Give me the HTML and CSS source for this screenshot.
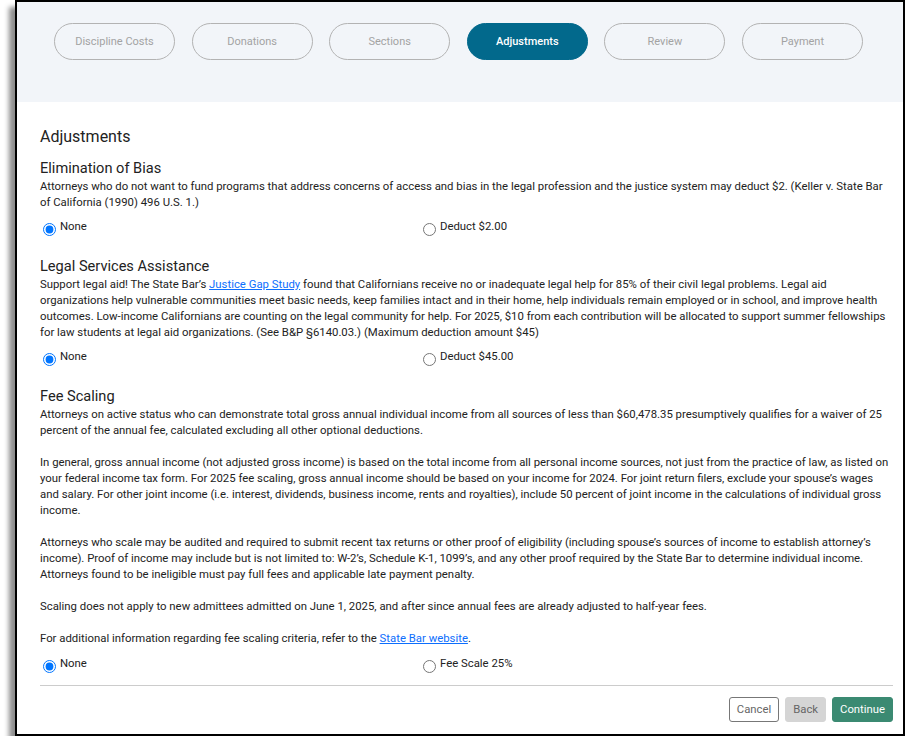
FILE: index.html
```html
<!DOCTYPE html>
<html lang="en">
<head>
    <meta charset="UTF-8">
    <meta name="viewport" content="width=device-width, initial-scale=1.0">
    <title>Adjustments</title>
    <link rel="stylesheet" href="styles.css">
</head>
<body>
    <div class="window">
        <div class="steps">
            <div class="step">Discipline Costs</div>
            <div class="step">Donations</div>
            <div class="step">Sections</div>
            <div class="step active">Adjustments</div>
            <div class="step">Review</div>
            <div class="step">Payment</div>
        </div>

        <div class="content">
            <h2>Adjustments</h2>

            <div class="section first">
                <h3>Elimination of Bias</h3>
                <p>Attorneys who do not want to fund programs that address concerns of access and bias in the legal profession and the justice system may deduct $2. (Keller v. State Bar of California (1990) 496 U.S. 1.)</p>
                <div class="options">
                    <label class="option"><input type="radio" name="bias" checked><span>None</span></label>
                    <label class="option"><input type="radio" name="bias"><span>Deduct $2.00</span></label>
                </div>
            </div>

            <div class="section">
                <h3>Legal Services Assistance</h3>
                <p>Support legal aid! The State Bar’s <a href="#">Justice Gap Study</a> found that Californians receive no or inadequate legal help for 85% of their civil legal problems. Legal aid organizations help vulnerable communities meet basic needs, keep families intact and in their home, help individuals remain employed or in school, and improve health outcomes. Low-income Californians are counting on the legal community for help. For 2025, $10 from each contribution will be allocated to support summer fellowships for law students at legal aid organizations. (See B&amp;P §6140.03.) (Maximum deduction amount $45)</p>
                <div class="options">
                    <label class="option"><input type="radio" name="legal" checked><span>None</span></label>
                    <label class="option"><input type="radio" name="legal"><span>Deduct $45.00</span></label>
                </div>
            </div>

            <div class="section">
                <h3>Fee Scaling</h3>
                <p>Attorneys on active status who can demonstrate total gross annual individual income from all sources of less than $60,478.35 presumptively qualifies for a waiver of 25 percent of the annual fee, calculated excluding all other optional deductions.</p>
                <p>In general, gross annual income (not adjusted gross income) is based on the total income from all personal income sources, not just from the practice of law, as listed on your federal income tax form. For 2025 fee scaling, gross annual income should be based on your income for 2024. For joint return filers, exclude your spouse’s wages and salary. For other joint income (i.e. interest, dividends, business income, rents and royalties), include 50 percent of joint income in the calculations of individual gross income.</p>
                <p>Attorneys who scale may be audited and required to submit recent tax returns or other proof of eligibility (including spouse’s sources of income to establish attorney’s income). Proof of income may include but is not limited to: W-2’s, Schedule K-1, 1099’s, and any other proof required by the State Bar to determine individual income. Attorneys found to be ineligible must pay full fees and applicable late payment penalty.</p>
                <p>Scaling does not apply to new admittees admitted on June 1, 2025, and after since annual fees are already adjusted to half-year fees.</p>
                <p>For additional information regarding fee scaling criteria, refer to the <a href="#">State Bar website</a>.</p>
                <div class="options last">
                    <label class="option"><input type="radio" name="scale" checked><span>None</span></label>
                    <label class="option"><input type="radio" name="scale"><span>Fee Scale 25%</span></label>
                </div>
            </div>

            <div class="actions">
                <button class="btn btn-cancel">Cancel</button>
                <button class="btn btn-back">Back</button>
                <button class="btn btn-continue">Continue</button>
            </div>
        </div>
    </div>
</body>
</html>
```

FILE: styles.css
```css
body {
    margin: 0;
    background: #fff;
    font-family: Roboto, 'Liberation Sans', sans-serif;
    color: #222;
}
.window {
    margin-left: 15px;
    width: 886px;
    height: 732px;
    border: 2px solid #000;
    background: #fff;
    box-shadow: -6px 7px 5px rgba(0,0,0,0.45);
}
.steps {
    height: 100px;
    box-sizing: border-box;
    padding: 21px 0 0 37px;
    background: #f2f5f9;
    display: flex;
    gap: 16.6px;
}
.step {
    width: 121px;
    height: 37px;
    box-sizing: border-box;
    border: 1px solid #b3b3b3;
    border-radius: 19px;
    display: flex;
    align-items: center;
    justify-content: center;
    font-size: 11px;
    color: #a3a3a3;
}
.step.active {
    background: #02698c;
    border-color: #02698c;
    color: #fff;
    font-weight: 500;
}
.content {
    padding: 0 10px 0 23px;
}
h2 {
    margin: 25px 0 0;
    font-size: 16px;
    line-height: 20px;
    font-weight: 400;
}
h3 {
    margin: 0 0 1px;
    font-size: 14.6px;
    line-height: 18px;
    font-weight: 400;
}
.section {
    margin-top: 21px;
}
.section.first {
    margin-top: 12px;
}
p {
    margin: 0 0 16px;
    font-size: 11.35px;
    line-height: 16px;
}
p:last-of-type {
    margin-bottom: 0;
}
a {
    color: #0d6efd;
}
.options {
    margin-top: 8px;
    display: grid;
    grid-template-columns: 380px 1fr;
}
.options.last {
    margin-top: 9px;
}
.option {
    display: flex;
    align-items: flex-start;
    font-size: 11.35px;
    line-height: 16px;
}
.option input {
    margin: 5px 4px 0 3px;
    width: 13px;
    height: 13px;
}
.actions {
    margin-top: 12px;
    border-top: 1px solid #ccc;
    padding-top: 11px;
    display: flex;
    justify-content: flex-end;
    gap: 6px;
}
.btn {
    height: 25px;
    padding: 0 7px;
    border-radius: 3px;
    font-family: Roboto, 'Liberation Sans', sans-serif;
    font-size: 11.3px;
    border: 1px solid transparent;
    cursor: pointer;
}
.btn-cancel {
    background: #fff;
    border-color: #777;
    color: #666;
}
.btn-back {
    background: #d5d5d5;
    border-color: #d5d5d5;
    color: #666;
}
.btn-continue {
    background: #3b8a72;
    border-color: #3b8a72;
    color: #fff;
}
```
